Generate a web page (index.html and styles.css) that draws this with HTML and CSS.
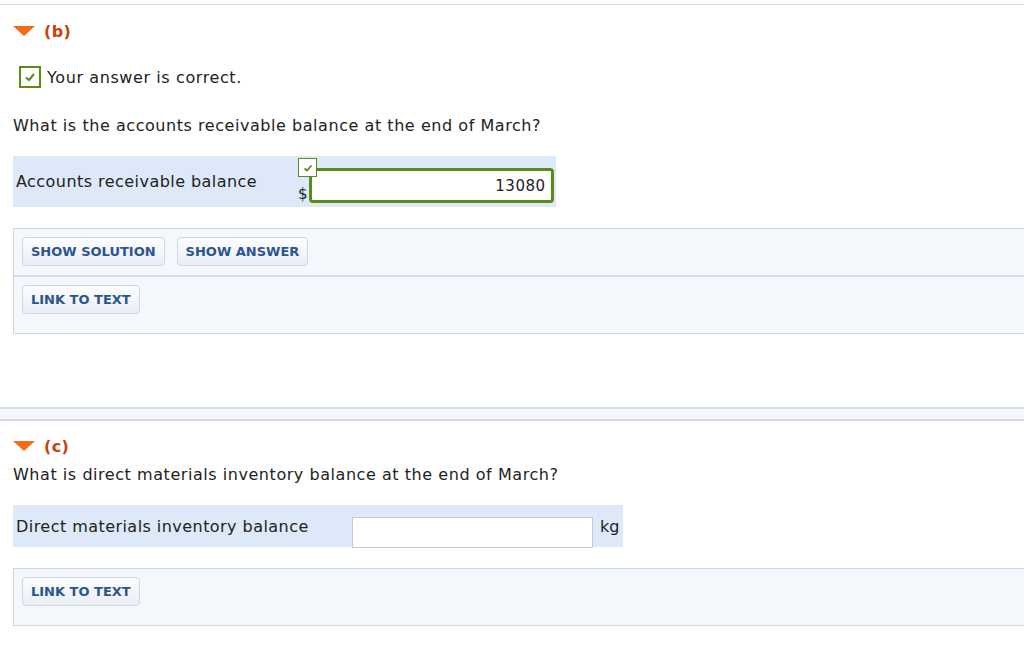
FILE: index.html
```html
<!DOCTYPE html>
<html lang="en">
<head>
    <meta charset="UTF-8">
    <title>Question parts</title>
    <link rel="stylesheet" href="styles.css">
</head>
<body>
    <div class="top-rule"></div>

    <div class="part">
        <div class="part-title"><span class="caret"></span>(b)</div>

        <div class="feedback">
            <span class="check-box">
                <svg width="14" height="14" viewBox="0 0 14 14"><path d="M3 7.5 L6 10 L11 4" fill="none" stroke="#5b8c1a" stroke-width="2"/></svg>
            </span>
            Your answer is correct.
        </div>

        <p class="question">What is the accounts receivable balance at the end of March?</p>

        <div class="answer-row answer-row-b">
            <label class="answer-label">Accounts receivable balance</label>
            <div class="answer-field">
                <span class="mini-check">
                    <svg width="12" height="12" viewBox="0 0 12 12"><path d="M2.5 6.5 L5 8.5 L9.5 3.5" fill="none" stroke="#5b8c1a" stroke-width="1.8"/></svg>
                </span>
                <span class="unit-before">$</span>
                <input class="answer-input correct" type="text" value="13080">
            </div>
        </div>

        <div class="help-box">
            <div class="help-row">
                <button class="help-btn">SHOW SOLUTION</button>
                <button class="help-btn">SHOW ANSWER</button>
            </div>
            <div class="help-row help-row-last">
                <button class="help-btn">LINK TO TEXT</button>
            </div>
        </div>
    </div>

    <div class="part-divider"></div>

    <div class="part part-c">
        <div class="part-title"><span class="caret"></span>(c)</div>

        <p class="question question-c">What is direct materials inventory balance at the end of March?</p>

        <div class="answer-row answer-row-c">
            <label class="answer-label">Direct materials inventory balance</label>
            <input class="answer-input empty" type="text">
            <span class="unit-after">kg</span>
        </div>

        <div class="help-box help-box-c">
            <div class="help-row help-row-last">
                <button class="help-btn">LINK TO TEXT</button>
            </div>
        </div>
    </div>
</body>
</html>
```

FILE: styles.css
```css
* {
    margin: 0;
    padding: 0;
    box-sizing: border-box;
}

body {
    background-color: #fff;
    font-family: "DejaVu Sans", Verdana, sans-serif;
    font-size: 15px;
    color: #222;
    overflow: hidden;
}

.top-rule {
    margin-top: 4px;
    height: 1px;
    background-color: #d8dfe8;
}

.part {
    padding-left: 13px;
}

.part-title {
    display: flex;
    align-items: center;
    margin-top: 16px;
    height: 20px;
    font-size: 16px;
    font-weight: bold;
    letter-spacing: 0.4px;
    color: #c8420a;
}

.caret {
    width: 0;
    height: 0;
    margin-right: 9px;
    border-left: 11px solid transparent;
    border-right: 11px solid transparent;
    border-top: 10px solid #f76a16;
}

.feedback {
    display: flex;
    align-items: center;
    margin-top: 25px;
    margin-left: 6px;
    height: 22px;
    font-size: 16px;
    letter-spacing: 0.6px;
}

.check-box {
    display: flex;
    align-items: center;
    justify-content: center;
    width: 22px;
    height: 22px;
    margin-right: 6px;
    border: 2px solid #5b8c1a;
    background-color: #fff;
}

.question {
    margin-top: 28px;
    font-size: 16px;
    letter-spacing: 0.55px;
}

.answer-row {
    display: flex;
    align-items: center;
    background-color: #dde8f8;
}

.answer-row-b {
    width: 543px;
    height: 51px;
    margin-top: 21px;
}

.answer-label {
    padding-left: 3px;
    font-size: 16px;
    letter-spacing: 0.45px;
}

.answer-row-b .answer-label {
    width: 285px;
    align-self: flex-start;
    margin-top: 16px;
}

.answer-field {
    position: relative;
    display: flex;
    align-items: flex-end;
    height: 100%;
    padding-bottom: 4px;
}

.mini-check {
    position: absolute;
    top: 2px;
    left: 0;
    display: flex;
    align-items: center;
    justify-content: center;
    width: 19px;
    height: 19px;
    border: 1px solid #5b8c1a;
    background-color: #fff;
    z-index: 1;
}

.unit-before {
    font-size: 15px;
    line-height: 18px;
}

.answer-input {
    font-family: "DejaVu Sans", Verdana, sans-serif;
    font-size: 15px;
    letter-spacing: 0.5px;
    color: #222;
    background-color: #fff;
    outline: none;
}

.answer-input.correct {
    width: 245px;
    height: 35px;
    margin-left: 1px;
    padding-right: 5px;
    text-align: right;
    border: 3px solid #5b8c1a;
    border-radius: 4px;
}

.help-box {
    margin-top: 21px;
    margin-right: -1px;
    background-color: #f4f7fb;
    border: 1px solid #ccd5e1;
}

.help-row {
    display: flex;
    gap: 12px;
    padding: 8px 8px 9px 8px;
    border-bottom: 2px solid #d3dbe5;
}

.help-row-last {
    border-bottom: none;
    padding-bottom: 19px;
}

.help-btn {
    height: 29px;
    padding: 0 8px;
    font-family: "DejaVu Sans", Verdana, sans-serif;
    font-size: 13px;
    font-weight: bold;
    color: #2a5592;
    background: linear-gradient(#fdfdfe, #e9eef4);
    border: 1px solid #cdd6e1;
    border-radius: 4px;
}

.part-divider {
    margin-top: 73px;
    height: 14px;
    background-color: #f4f7fb;
    border-top: 2px solid #d3dbe5;
    border-bottom: 2px solid #d3dbe5;
}

.part-c .part-title {
    margin-top: 15px;
}

.question-c {
    margin-top: 9px;
}

.answer-row-c {
    width: 610px;
    height: 42px;
    margin-top: 21px;
}

.answer-row-c .answer-label {
    width: 339px;
}

.answer-input.empty {
    width: 241px;
    height: 31px;
    margin-top: 12px;
    margin-bottom: -1px;
    border: 1px solid #c8c8c8;
    align-self: flex-start;
}

.unit-after {
    margin-left: 7px;
    font-size: 16px;
}

.help-box-c {
    margin-top: 21px;
}

.help-box-c .help-row-last {
    padding-bottom: 19px;
}
```
